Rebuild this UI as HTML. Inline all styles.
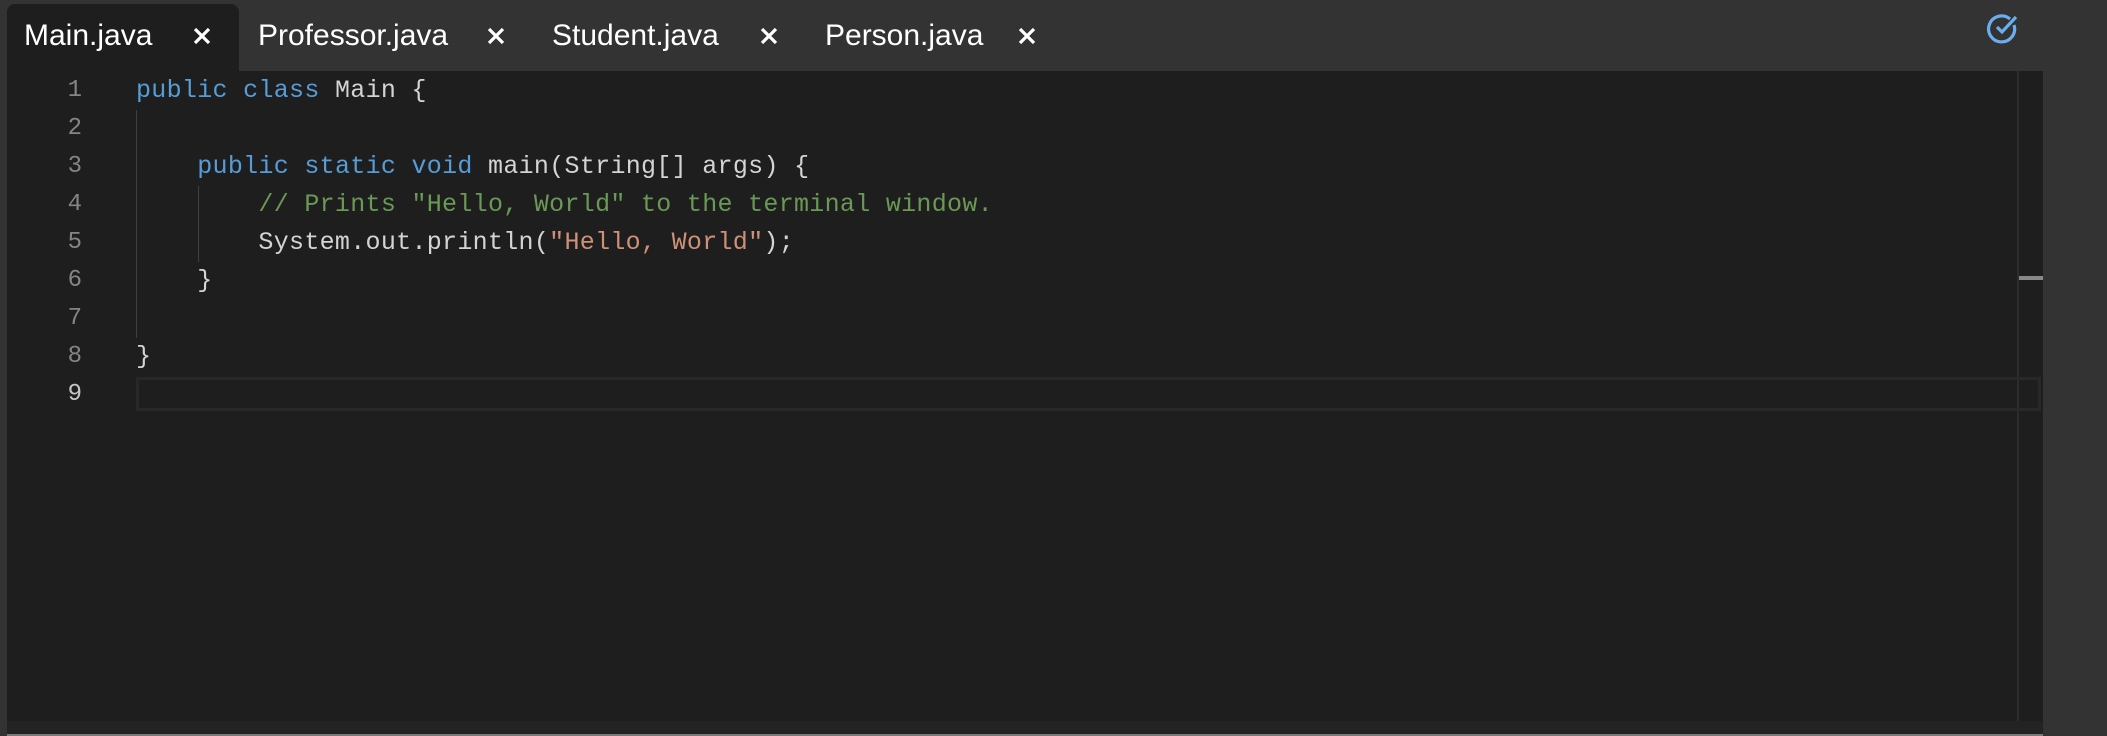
<!DOCTYPE html>
<html><head><style>
html,body{margin:0;padding:0;width:2107px;height:736px;background:#333;overflow:hidden}
.tabs{position:absolute;left:0;top:0;width:2043px;height:71px;background:#333}
.tab{position:absolute;top:0;font-family:"Liberation Sans",sans-serif;font-size:30px;color:#fff;line-height:71px;letter-spacing:0px}
.act{position:absolute;left:7px;top:4px;width:232px;height:67px;background:#1e1e1e;border-radius:8px 8px 0 0}
.x{position:absolute;top:25px}
.ed{position:absolute;left:7px;top:71px;width:2010px;height:650px;background:#1e1e1e}
.sb{position:absolute;left:2017px;top:71px;width:26px;height:650px;background:#1e1e1e;border-left:2px solid #2c2c2c;box-sizing:border-box}
.bot{position:absolute;left:7px;top:721px;width:2036px;height:14px;background:#232323}
.bl{position:absolute;left:7px;top:734px;width:2036px;height:2px;background:#7a7a7a}
.ln{position:absolute;width:82px;text-align:right;font-family:"Liberation Mono",monospace;font-size:24px;color:#858585;line-height:38px}
.code{position:absolute;left:136px;font-family:"Liberation Mono",monospace;font-size:25px;color:#d4d4d4;line-height:38px;white-space:pre;letter-spacing:0.3px}
.k{color:#569cd6}.c{color:#6a9955}.s{color:#ce9178}
.g{position:absolute;width:1px;background:#404040}
</style></head><body>
<div class="tabs">
<div class="act"></div>
<div class="tab" style="left:24px">Main.java</div>
<div class="tab" style="left:258px">Professor.java</div>
<div class="tab" style="left:552px">Student.java</div>
<div class="tab" style="left:825px">Person.java</div>
<svg class="x" style="left:191px" width="22" height="22" viewBox="0 0 22 22"><path d="M4 4L18 18M18 4L4 18" stroke="#fff" stroke-width="3.2"/></svg>
<svg class="x" style="left:485px" width="22" height="22" viewBox="0 0 22 22"><path d="M4 4L18 18M18 4L4 18" stroke="#fff" stroke-width="3.2"/></svg>
<svg class="x" style="left:758px" width="22" height="22" viewBox="0 0 22 22"><path d="M4 4L18 18M18 4L4 18" stroke="#fff" stroke-width="3.2"/></svg>
<svg class="x" style="left:1016px" width="22" height="22" viewBox="0 0 22 22"><path d="M4 4L18 18M18 4L4 18" stroke="#fff" stroke-width="3.2"/></svg>
<svg style="position:absolute;left:1986px;top:12px" width="34" height="34" viewBox="0 0 34 34"><path d="M28 13A13 13 0 1 1 24 7" fill="none" stroke="#6aaef0" stroke-width="3.2"/><path d="M11 15L16 20L30 5" fill="none" stroke="#6aaef0" stroke-width="3.2"/></svg>
</div>
<div class="ed"></div>
<div class="sb"><div style="position:absolute;left:0;top:205px;width:24px;height:4px;background:#888"></div></div>
<div class="bot"></div><div class="bl"></div>
<div style="position:absolute;left:136px;top:377px;width:1905px;height:34px;border:3px solid #282828;box-sizing:border-box"></div>
<div class="g" style="left:136px;top:110px;height:228px"></div>
<div class="g" style="left:198px;top:186px;height:76px"></div>
<div class="ln" style="top:72px">1<br>2<br>3<br>4<br>5<br>6<br>7<br>8<br><span style="color:#c6c6c6">9</span></div>
<div class="code" style="top:72px"><span class="k">public</span> <span class="k">class</span> Main {

    <span class="k">public</span> <span class="k">static</span> <span class="k">void</span> main(String[] args) {
        <span class="c">// Prints "Hello, World" to the terminal window.</span>
        System.out.println(<span class="s">"Hello, World"</span>);
    }

}
</div>
</body></html>
